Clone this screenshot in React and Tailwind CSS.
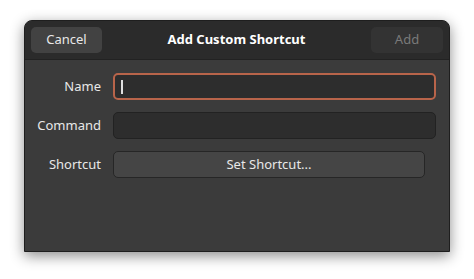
export default function App() {
  return (
    <div className="w-[474px] h-[279px] bg-white pt-[20px] pl-[24px]" style={{ fontFamily: '"Noto Sans", "Open Sans", sans-serif' }}>
      <div className="w-[426px] h-[232px] rounded-t-[8px] bg-[#3b3b3b] border border-[#1e1e1e] shadow-[0_4px_14px_rgba(0,0,0,0.45)] flex flex-col overflow-hidden">
        <div className="h-[39px] bg-[#2b2b2b] border-b border-[#222] flex items-center justify-between px-[6px] shrink-0">
          <button className="w-[71px] h-[26px] rounded-[5px] bg-[#424242] text-[#e8e8e8] text-[13px]">Cancel</button>
          <span className="text-white font-bold text-[13px]">Add Custom Shortcut</span>
          <button className="w-[72px] h-[26px] rounded-[5px] bg-[#333333] text-[#7a7a7a] text-[13px]">Add</button>
        </div>
        <div className="grid grid-cols-[76px_1fr] gap-x-[12px] gap-y-[12px] pt-[13px] pr-[13px] items-center">
          <span className="text-right text-[#e8e8e8] text-[13px]">Name</span>
          <div className="h-[27px] rounded-[5px] bg-[#2d2d2d] border-2 border-[#b8644a] flex items-center pl-[6px]">
            <span className="w-[1.5px] h-[14px] bg-[#e0e0e0]"></span>
          </div>
          <span className="text-right text-[#e8e8e8] text-[13px]">Command</span>
          <div className="h-[27px] rounded-[5px] bg-[#2d2d2d] border border-[#222]"></div>
          <span className="text-right text-[#e8e8e8] text-[13px]">Shortcut</span>
          <button className="mr-[11px] h-[27px] rounded-[5px] bg-[#454545] border border-[#262626] text-[#e8e8e8] text-[13px]">Set Shortcut...</button>
        </div>
      </div>
    </div>
  );
}
